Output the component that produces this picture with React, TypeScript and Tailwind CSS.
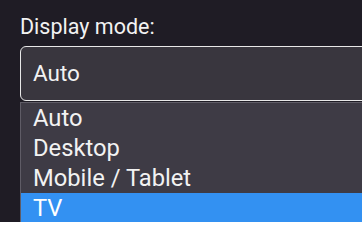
const OPTIONS = ["Auto", "Desktop", "Mobile / Tablet", "TV"];

export default function App() {
  const selected = "TV";
  return (
    <div className="h-[222px] w-[362px] overflow-hidden bg-[#1f1c25] font-['Roboto','Liberation_Sans',sans-serif] text-[#f2f2f2]">
      <div className="pl-5 pt-[14px]">
        <div className="text-[21.5px] leading-[26px]">Display mode:</div>
        <div className="mt-[6px] flex h-[55px] w-[400px] items-center rounded-[6px] border border-[#e8e8e8] bg-[#39363e] pl-3 text-[22.5px]">
          Auto
        </div>
        <ul className="mt-px w-[400px] border-l border-t border-[#5f5c66] bg-[#3e3b45] text-[23.75px]">
          {OPTIONS.map((opt) => (
            <li
              key={opt}
              className={
                opt === selected
                  ? "h-[30px] bg-[#3391f2] pl-3 leading-[30px] text-white"
                  : "h-[30px] pl-3 leading-[30px]"
              }
            >
              {opt}
            </li>
          ))}
        </ul>
      </div>
    </div>
  );
}
